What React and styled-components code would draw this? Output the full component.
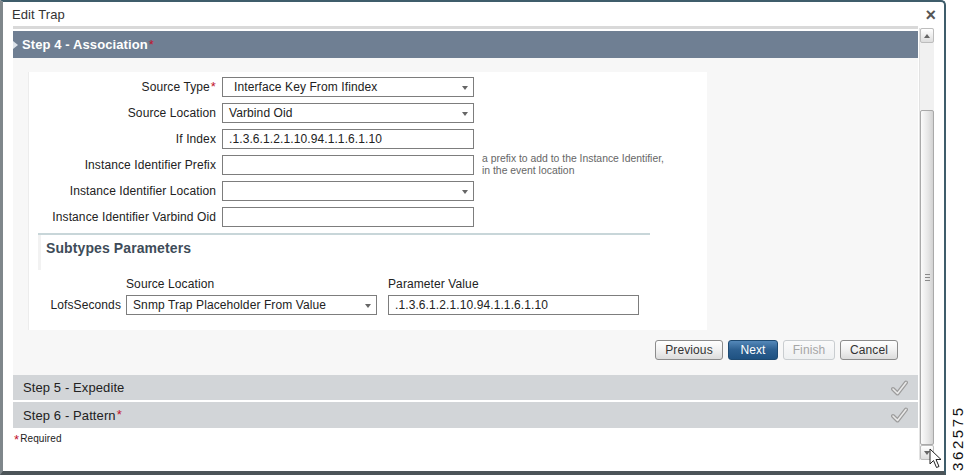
import React from "react";
import styled, { createGlobalStyle } from "styled-components";

const GlobalStyle = createGlobalStyle`
  html, body {
    margin: 0;
    padding: 0;
    background: #ffffff;
  }
  body {
    font-family: "Liberation Sans", Arial, sans-serif;
    font-size: 12px;
    letter-spacing: 0.1px;
    color: #222;
  }
`;

const formRows = [
  { label: "Source Type", required: true, value: "Interface Key From Ifindex", select: true, indent: 11 },
  { label: "Source Location", value: "Varbind Oid", select: true },
  { label: "If Index", value: ".1.3.6.1.2.1.10.94.1.1.6.1.10" },
  {
    label: "Instance Identifier Prefix",
    value: "",
    hint: ["a prefix to add to the Instance Identifier,", "in the event location"],
  },
  { label: "Instance Identifier Location", value: "", select: true },
  { label: "Instance Identifier Varbind Oid", value: "" },
];

const buttons = [
  { label: "Previous", width: 68 },
  { label: "Next", width: 50, primary: true },
  { label: "Finish", width: 52, disabled: true },
  { label: "Cancel", width: 58 },
];

function Check() {
  return (
    <svg width="17" height="16" viewBox="0 0 17 16">
      <path d="M2 9 L6.5 13.5 L15 2.5" fill="none" stroke="#9c9c9c" strokeWidth="4" strokeLinecap="round" strokeLinejoin="round" />
      <path d="M2 9 L6.5 13.5 L15 2.5" fill="none" stroke="#e9e9e9" strokeWidth="1.6" strokeLinecap="round" strokeLinejoin="round" />
    </svg>
  );
}

function Arrow({ up }) {
  return (
    <svg width="6" height="4" viewBox="0 0 6 4">
      <path d={up ? "M0 4 L3 0 L6 4 Z" : "M0 0 L3 4 L6 0 Z"} fill="#666" />
    </svg>
  );
}

function Cursor() {
  return (
    <svg width="14" height="21" viewBox="0 0 14 21">
      <path d="M1 1 L1 16 L4.5 12.5 L7.5 19.5 L10 18.5 L7 11.5 L12 11.5 Z" fill="#fff" stroke="#222" strokeWidth="1" strokeLinejoin="round" />
    </svg>
  );
}

function App() {
  return (
    <>
      <GlobalStyle />
      <Page>
        <Dialog>
          <TitleBar>
            <Title>Edit Trap</Title>
            <Close>×</Close>
          </TitleBar>
          <Body>
            <Main>
              <Band />
              <StepHeader>
                <Caret />
                Step 4 - Association<Star>*</Star>
              </StepHeader>
              <Content>
                <Panel>
                  <FormGrid>
                    {formRows.map((row) => (
                      <React.Fragment key={row.label}>
                        <Label>
                          {row.label}
                          {row.required && <Star>*</Star>}
                        </Label>
                        <Field $indent={row.indent}>
                          {row.value}
                          {row.select && (
                            <SelectArrow>
                              <Arrow />
                            </SelectArrow>
                          )}
                        </Field>
                        <Hint>
                          {row.hint &&
                            row.hint.map((line) => <div key={line}>{line}</div>)}
                        </Hint>
                      </React.Fragment>
                    ))}
                  </FormGrid>
                  <SubSection>
                    <SubHeader>Subtypes Parameters</SubHeader>
                  </SubSection>
                  <ParamGrid>
                    <span />
                    <ColHead>Source Location</ColHead>
                    <ColHead>Parameter Value</ColHead>
                    <ParamLabel>LofsSeconds</ParamLabel>
                    <Field>
                      Snmp Trap Placeholder From Value
                      <SelectArrow>
                        <Arrow />
                      </SelectArrow>
                    </Field>
                    <Field>.1.3.6.1.2.1.10.94.1.1.6.1.10</Field>
                  </ParamGrid>
                </Panel>
                <ButtonRow>
                  {buttons.map((b) => (
                    <Button
                      key={b.label}
                      $width={b.width}
                      $primary={b.primary}
                      $disabled={b.disabled}
                    >
                      {b.label}
                    </Button>
                  ))}
                </ButtonRow>
              </Content>
              <StepBar>
                Step 5 - Expedite
                <Check />
              </StepBar>
              <StepBar $tall>
                <span>
                  Step 6 - Pattern<Star>*</Star>
                </span>
                <Check />
              </StepBar>
              <Required>
                <Star>*</Star>
                Required
              </Required>
            </Main>
            <Scrollbar>
              <ScrollButton>
                <Arrow up />
              </ScrollButton>
              <TrackSpace />
              <Thumb>
                <Grip />
              </Thumb>
              <ScrollButton>
                <Arrow />
              </ScrollButton>
              <CursorSpot>
                <Cursor />
              </CursorSpot>
            </Scrollbar>
          </Body>
        </Dialog>
        <Side>
          <FigureId>362575</FigureId>
        </Side>
      </Page>
    </>
  );
}

export default App;

const Page = styled.div`
  display: flex;
  width: 965px;
  height: 475px;
  overflow: hidden;
`;

const Dialog = styled.div`
  width: 941px;
  height: 469px;
  display: flex;
  flex-direction: column;
  background: #fff;
  border-top: 2px solid #3f5d6b;
  border-right: 2px solid #3f5d6b;
  border-bottom: 4px solid #4c5458;
  border-left: 3px solid #7f878b;
  border-top-right-radius: 5px;
`;

const TitleBar = styled.div`
  height: 24px;
  display: flex;
  align-items: center;
  justify-content: space-between;
  padding: 0 8px 0 9px;
`;

const Title = styled.div`
  font-size: 13px;
  color: #333;
  padding-top: 1px;
`;

const Close = styled.div`
  font-size: 18px;
  font-weight: bold;
  color: #555;
  line-height: 1;
  padding-top: 2px;
`;

const Body = styled.div`
  flex: 1;
  display: flex;
  padding-left: 10px;
  padding-right: 10px;
`;

const Main = styled.div`
  width: 905px;
  display: flex;
  flex-direction: column;
`;

const Band = styled.div`
  height: 3px;
  background: #d9d9d9;
  margin-bottom: 2px;
`;

const StepHeader = styled.div`
  height: 27px;
  display: flex;
  align-items: center;
  background: #6f7f93;
  color: #fff;
  font-size: 13px;
  font-weight: bold;
`;

const Caret = styled.span`
  width: 0;
  height: 0;
  border-top: 4px solid transparent;
  border-bottom: 4px solid transparent;
  border-left: 5px solid #dde3ea;
  margin-right: 4px;
`;

const Star = styled.span`
  color: #c1132d;
  font-weight: normal;
  font-size: 13px;
  vertical-align: top;
  line-height: 1;
  margin-left: 1px;
`;

const Content = styled.div`
  height: 317px;
  box-sizing: border-box;
  background: #f7f7f7;
  padding: 14px 20px 15px 15px;
  display: flex;
  flex-direction: column;
`;

const Panel = styled.div`
  width: 679px;
  height: 258px;
  box-sizing: border-box;
  background: #fff;
  border-left: 1px solid #ececec;
  padding-top: 5px;
`;

const FormGrid = styled.div`
  display: grid;
  grid-template-columns: 187px 252px 1fr;
  grid-auto-rows: 20px;
  column-gap: 6px;
  row-gap: 6px;
  align-items: center;
`;

const Label = styled.div`
  text-align: right;
  white-space: nowrap;
  color: #222;
`;

const Field = styled.div`
  position: relative;
  height: 20px;
  box-sizing: border-box;
  border: 1px solid #7d7d7d;
  background: #fff;
  padding-left: ${(p) => p.$indent || 6}px;
  display: flex;
  align-items: center;
  white-space: nowrap;
  color: #222;
`;

const SelectArrow = styled.span`
  position: absolute;
  right: 5px;
  top: 8px;
  display: flex;
`;

const Hint = styled.div`
  font-size: 10.4px;
  letter-spacing: 0;
  color: #666;
  line-height: 12px;
  padding-left: 2px;
  white-space: nowrap;
`;

const SubSection = styled.div`
  margin: 6px 0 0 9px;
  width: 612px;
  border-top: 2px solid #c8d6d9;
`;

const SubHeader = styled.div`
  height: 35px;
  box-sizing: border-box;
  border-left: 3px solid #f2f2f2;
  padding: 5px 0 0 5px;
  font-size: 14px;
  font-weight: bold;
  color: #3e4c59;
`;

const ParamGrid = styled.div`
  margin: 7px 0 0 9px;
  display: grid;
  grid-template-columns: 84px 251px 258px;
  grid-template-rows: 14px 20px;
  column-gap: 4px;
  row-gap: 4px;
  align-items: center;
  & > :nth-child(3n) {
    margin-left: 7px;
  }
`;

const ColHead = styled.div`
  white-space: nowrap;
  color: #222;
`;

const ParamLabel = styled.div`
  text-align: right;
  padding-right: 1px;
`;

const ButtonRow = styled.div`
  margin-top: 10px;
  display: flex;
  justify-content: flex-end;
  gap: 5px;
`;

const Button = styled.div`
  width: ${(p) => p.$width}px;
  height: 20px;
  box-sizing: border-box;
  border-radius: 3px;
  display: flex;
  align-items: center;
  justify-content: center;
  font-size: 12px;
  border: 1px solid
    ${(p) => (p.$primary ? "#1e4a72" : p.$disabled ? "#c9cdd0" : "#8c8c8c")};
  color: ${(p) => (p.$primary ? "#fff" : p.$disabled ? "#a6a6a6" : "#333")};
  background: ${(p) =>
    p.$primary
      ? "linear-gradient(#5488b9, #2c5f90 50%, #1f5282)"
      : p.$disabled
      ? "linear-gradient(#fafafa, #eef0f1)"
      : "linear-gradient(#ffffff, #f1f1f1 50%, #dcdcdc)"};
`;

const StepBar = styled.div`
  height: ${(p) => (p.$tall ? 26 : 25)}px;
  margin-bottom: ${(p) => (p.$tall ? 0 : 2)}px;
  display: flex;
  align-items: center;
  justify-content: space-between;
  padding: 0 10px 0 10px;
  background: #d2d5d8;
  font-size: 13px;
  color: #222;
`;

const Required = styled.div`
  padding: 5px 0 0 1px;
  font-size: 10px;
  color: #222;
  & > span {
    font-size: 13px;
    margin-right: 1px;
    margin-left: 0;
  }
`;

const Scrollbar = styled.div`
  position: relative;
  width: 15px;
  margin: 2px 0 11px 1px;
  display: flex;
  flex-direction: column;
  background: #f1f1f1;
  box-sizing: border-box;
  border-left: 1px solid #e2e2e2;
`;

const ScrollButton = styled.div`
  height: 15px;
  box-sizing: border-box;
  border: 1px solid #bdbdbd;
  border-radius: 2px;
  background: linear-gradient(#ffffff, #dedede);
  display: flex;
  align-items: center;
  justify-content: center;
`;

const TrackSpace = styled.div`
  height: 67px;
`;

const Thumb = styled.div`
  flex: 1;
  box-sizing: border-box;
  border: 1px solid #a9a9a9;
  border-radius: 2px;
  background: linear-gradient(90deg, #fbfbfb, #e6e6e6 60%, #d2d2d2);
  display: flex;
  align-items: center;
  justify-content: center;
`;

const Grip = styled.div`
  width: 5px;
  height: 5px;
  border-top: 1px solid #8a8a8a;
  border-bottom: 1px solid #8a8a8a;
  position: relative;
  &::after {
    content: "";
    position: absolute;
    left: 0;
    right: 0;
    top: 2px;
    border-top: 1px solid #8a8a8a;
  }
`;

const CursorSpot = styled.div`
  position: absolute;
  left: 9px;
  bottom: -12px;
`;

const Side = styled.div`
  flex: 1;
  position: relative;
`;

const FigureId = styled.div`
  position: absolute;
  left: 19px;
  bottom: 4px;
  transform: rotate(-90deg);
  transform-origin: left bottom;
  font-family: "Liberation Sans", Arial, sans-serif;
  font-size: 15px;
  letter-spacing: 2.6px;
  color: #111;
  white-space: nowrap;
  line-height: 1;
`;
